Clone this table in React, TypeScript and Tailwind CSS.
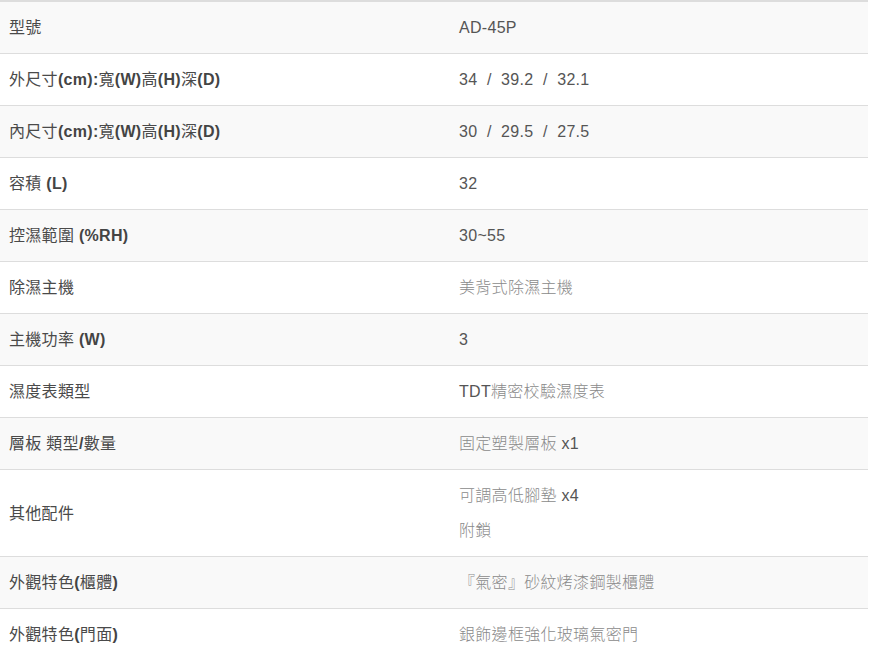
const specs: { label: string; values: string[] }[] = [
  { label: "型號", values: ["AD-45P"] },
  { label: "外尺寸(cm):寬(W)高(H)深(D)", values: ["34  /  39.2  /  32.1"] },
  { label: "內尺寸(cm):寬(W)高(H)深(D)", values: ["30  /  29.5  /  27.5"] },
  { label: "容積 (L)", values: ["32"] },
  { label: "控濕範圍 (%RH)", values: ["30~55"] },
  { label: "除濕主機", values: ["美背式除濕主機"] },
  { label: "主機功率 (W)", values: ["3"] },
  { label: "濕度表類型", values: ["TDT精密校驗濕度表"] },
  { label: "層板 類型/數量", values: ["固定塑製層板 x1"] },
  { label: "其他配件", values: ["可調高低腳墊 x4", "附鎖"] },
  { label: "外觀特色(櫃體)", values: ["『氣密』砂紋烤漆鋼製櫃體"] },
  { label: "外觀特色(門面)", values: ["銀飾邊框強化玻璃氣密門"] },
];

const cjk = /([\u3000-\u30ff\u3400-\u9fff\uff00-\uffef]+)/;

function Mixed({ text, latin, han }: { text: string; latin: string; han: string }) {
  return (
    <>
      {text.split(cjk).map((part, i) =>
        part === "" ? null : cjk.test(part) ? (
          <span key={i} className={`leading-[10px] ${han}`}>
            {part}
          </span>
        ) : (
          <span key={i} className={`leading-[10px] ${latin}`}>
            {part}
          </span>
        ),
      )}
    </>
  );
}

export default function App() {
  return (
    <div className="min-h-screen bg-white">
      <div
        className="w-[868px] border-t-2 border-[#dddddd] text-[16px] leading-[19px] tracking-[0.3px]"
        style={{ fontFamily: '"Liberation Sans", Arial, "Noto Sans CJK TC", sans-serif' }}
      >
        {specs.map((row, idx) => (
          <div
            key={row.label}
            className={`flex border-b border-[#dddddd] ${idx % 2 === 0 ? "bg-[#f9f9f9]" : "bg-white"}`}
          >
            <div className="flex w-[450px] shrink-0 items-center px-[9px] py-4 whitespace-pre">
              <div className="h-[19px]">
                <Mixed text={row.label} latin="font-bold text-[#444444]" han="font-normal text-[#4a4a4a]" />
              </div>
            </div>
            <div className="flex flex-1 flex-col gap-4 px-[9px] py-4 whitespace-pre">
              {row.values.map((v) => (
                <div key={v} className="h-[19px]">
                  <Mixed text={v} latin="text-[#555555]" han="font-light text-[#8a8a8a]" />
                </div>
              ))}
            </div>
          </div>
        ))}
      </div>
    </div>
  );
}
